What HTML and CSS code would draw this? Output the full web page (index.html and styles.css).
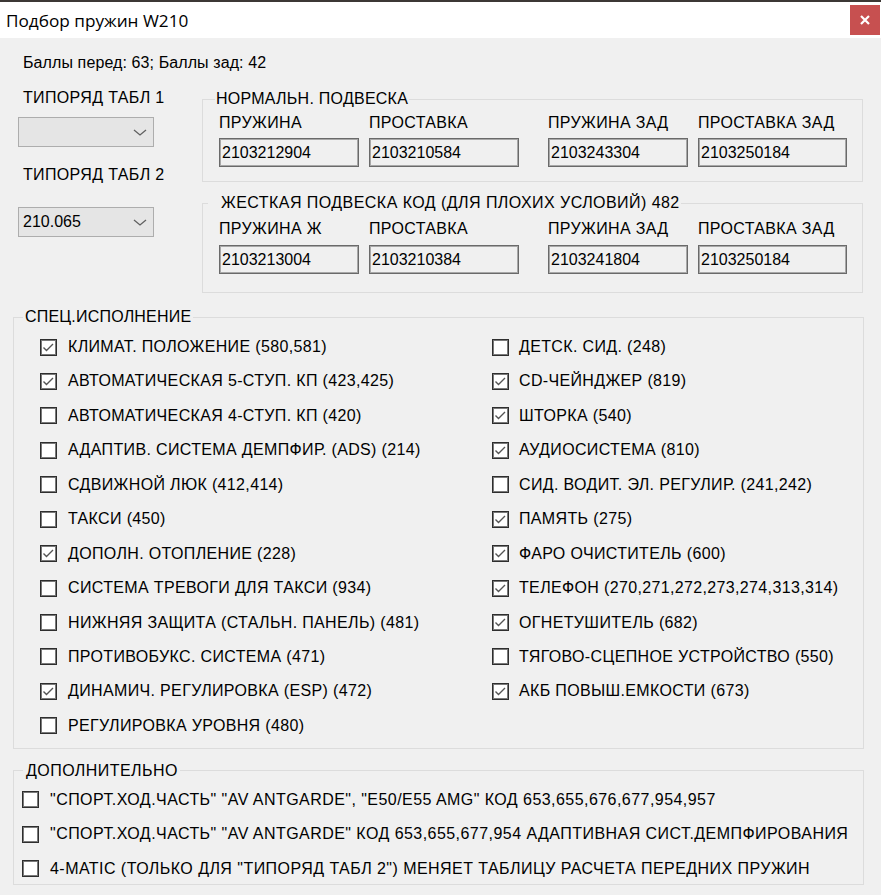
FILE: index.html
```html
<!DOCTYPE html>
<html lang="ru">
<head>
<meta charset="utf-8">
<title>Подбор пружин W210</title>
<link rel="stylesheet" href="styles.css">
</head>
<body>
<div class="window">
  <div class="titlebar">
    <span class="title">Подбор пружин W210</span>
    <div class="close"><svg width="10" height="10" viewBox="0 0 10 10"><path d="M1 1 L9 9 M9 1 L1 9" stroke="#fff" stroke-width="2.2" fill="none"/></svg></div>
  </div>
  <div class="content">
    <div class="score">Баллы перед: 63; Баллы зад: 42</div>
    <div class="top">
      <div class="left">
        <div class="lbl">ТИПОРЯД ТАБЛ 1</div>
        <div class="combo c1"><span></span><svg class="chev" width="14" height="7" viewBox="0 0 14 7"><path d="M1 1 L7 6 L13 1" stroke="#606060" stroke-width="1.3" fill="none"/></svg></div>
        <div class="lbl l2">ТИПОРЯД ТАБЛ 2</div>
        <div class="combo c2"><span>210.065</span><svg class="chev" width="14" height="7" viewBox="0 0 14 7"><path d="M1 1 L7 6 L13 1" stroke="#606060" stroke-width="1.3" fill="none"/></svg></div>
      </div>
      <div class="right">
        <fieldset class="grp g1">
          <legend>НОРМАЛЬН. ПОДВЕСКА</legend>
          <div class="fields">
            <div class="field f140"><div class="flbl">ПРУЖИНА</div><div class="tb">2103212904</div></div>
            <div class="field f150"><div class="flbl">ПРОСТАВКА</div><div class="tb">2103210584</div></div>
            <div class="field f140"><div class="flbl">ПРУЖИНА ЗАД</div><div class="tb">2103243304</div></div>
            <div class="field f149"><div class="flbl">ПРОСТАВКА ЗАД</div><div class="tb">2103250184</div></div>
          </div>
        </fieldset>
        <fieldset class="grp g2">
          <legend>ЖЕСТКАЯ ПОДВЕСКА КОД (ДЛЯ ПЛОХИХ УСЛОВИЙ) 482</legend>
          <div class="fields">
            <div class="field f140"><div class="flbl">ПРУЖИНА Ж</div><div class="tb">2103213004</div></div>
            <div class="field f150"><div class="flbl">ПРОСТАВКА</div><div class="tb">2103210384</div></div>
            <div class="field f140"><div class="flbl">ПРУЖИНА ЗАД</div><div class="tb">2103241804</div></div>
            <div class="field f149"><div class="flbl">ПРОСТАВКА ЗАД</div><div class="tb">2103250184</div></div>
          </div>
        </fieldset>
      </div>
    </div>

    <fieldset class="grp spec">
      <legend>СПЕЦ.ИСПОЛНЕНИЕ</legend>
      <div class="cols">
        <div class="col cl">
          <div class="cb"><span class="box on"><svg width="15" height="15" viewBox="0 0 15 15"><path d="M2.5 7.5 L5.5 10.5 L12 4" stroke="#555" stroke-width="1.4" fill="none"/></svg></span><span>КЛИМАТ. ПОЛОЖЕНИЕ (580,581)</span></div>
          <div class="cb"><span class="box on"><svg width="15" height="15" viewBox="0 0 15 15"><path d="M2.5 7.5 L5.5 10.5 L12 4" stroke="#555" stroke-width="1.4" fill="none"/></svg></span><span>АВТОМАТИЧЕСКАЯ 5-СТУП. КП (423,425)</span></div>
          <div class="cb"><span class="box"></span><span>АВТОМАТИЧЕСКАЯ 4-СТУП. КП (420)</span></div>
          <div class="cb"><span class="box"></span><span>АДАПТИВ. СИСТЕМА ДЕМПФИР. (ADS) (214)</span></div>
          <div class="cb"><span class="box"></span><span>СДВИЖНОЙ ЛЮК (412,414)</span></div>
          <div class="cb"><span class="box"></span><span>ТАКСИ (450)</span></div>
          <div class="cb"><span class="box on"><svg width="15" height="15" viewBox="0 0 15 15"><path d="M2.5 7.5 L5.5 10.5 L12 4" stroke="#555" stroke-width="1.4" fill="none"/></svg></span><span>ДОПОЛН. ОТОПЛЕНИЕ (228)</span></div>
          <div class="cb"><span class="box"></span><span>СИСТЕМА ТРЕВОГИ ДЛЯ ТАКСИ (934)</span></div>
          <div class="cb"><span class="box"></span><span>НИЖНЯЯ ЗАЩИТА (СТАЛЬН. ПАНЕЛЬ) (481)</span></div>
          <div class="cb"><span class="box"></span><span>ПРОТИВОБУКС. СИСТЕМА (471)</span></div>
          <div class="cb"><span class="box on"><svg width="15" height="15" viewBox="0 0 15 15"><path d="M2.5 7.5 L5.5 10.5 L12 4" stroke="#555" stroke-width="1.4" fill="none"/></svg></span><span>ДИНАМИЧ. РЕГУЛИРОВКА (ESP) (472)</span></div>
          <div class="cb"><span class="box"></span><span>РЕГУЛИРОВКА УРОВНЯ (480)</span></div>
        </div>
        <div class="col cr">
          <div class="cb"><span class="box"></span><span>ДЕТСК. СИД. (248)</span></div>
          <div class="cb"><span class="box on"><svg width="15" height="15" viewBox="0 0 15 15"><path d="M2.5 7.5 L5.5 10.5 L12 4" stroke="#555" stroke-width="1.4" fill="none"/></svg></span><span>CD-ЧЕЙНДЖЕР (819)</span></div>
          <div class="cb"><span class="box on"><svg width="15" height="15" viewBox="0 0 15 15"><path d="M2.5 7.5 L5.5 10.5 L12 4" stroke="#555" stroke-width="1.4" fill="none"/></svg></span><span>ШТОРКА (540)</span></div>
          <div class="cb"><span class="box on"><svg width="15" height="15" viewBox="0 0 15 15"><path d="M2.5 7.5 L5.5 10.5 L12 4" stroke="#555" stroke-width="1.4" fill="none"/></svg></span><span>АУДИОСИСТЕМА (810)</span></div>
          <div class="cb"><span class="box"></span><span>СИД. ВОДИТ. ЭЛ. РЕГУЛИР. (241,242)</span></div>
          <div class="cb"><span class="box on"><svg width="15" height="15" viewBox="0 0 15 15"><path d="M2.5 7.5 L5.5 10.5 L12 4" stroke="#555" stroke-width="1.4" fill="none"/></svg></span><span>ПАМЯТЬ (275)</span></div>
          <div class="cb"><span class="box on"><svg width="15" height="15" viewBox="0 0 15 15"><path d="M2.5 7.5 L5.5 10.5 L12 4" stroke="#555" stroke-width="1.4" fill="none"/></svg></span><span>ФАРО ОЧИСТИТЕЛЬ (600)</span></div>
          <div class="cb"><span class="box on"><svg width="15" height="15" viewBox="0 0 15 15"><path d="M2.5 7.5 L5.5 10.5 L12 4" stroke="#555" stroke-width="1.4" fill="none"/></svg></span><span>ТЕЛЕФОН (270,271,272,273,274,313,314)</span></div>
          <div class="cb"><span class="box on"><svg width="15" height="15" viewBox="0 0 15 15"><path d="M2.5 7.5 L5.5 10.5 L12 4" stroke="#555" stroke-width="1.4" fill="none"/></svg></span><span>ОГНЕТУШИТЕЛЬ (682)</span></div>
          <div class="cb"><span class="box"></span><span>ТЯГОВО-СЦЕПНОЕ УСТРОЙСТВО (550)</span></div>
          <div class="cb"><span class="box on"><svg width="15" height="15" viewBox="0 0 15 15"><path d="M2.5 7.5 L5.5 10.5 L12 4" stroke="#555" stroke-width="1.4" fill="none"/></svg></span><span>АКБ ПОВЫШ.ЕМКОСТИ (673)</span></div>
        </div>
      </div>
    </fieldset>

    <fieldset class="grp extra">
      <legend>ДОПОЛНИТЕЛЬНО</legend>
      <div class="rows">
        <div class="cb"><span class="box"></span><span>"СПОРТ.ХОД.ЧАСТЬ" "AV ANTGARDE", "E50/E55 AMG" КОД 653,655,676,677,954,957</span></div>
        <div class="cb"><span class="box"></span><span>"СПОРТ.ХОД.ЧАСТЬ" "AV ANTGARDE" КОД 653,655,677,954 АДАПТИВНАЯ СИСТ.ДЕМПФИРОВАНИЯ</span></div>
        <div class="cb"><span class="box"></span><span>4-MATIC (ТОЛЬКО ДЛЯ "ТИПОРЯД ТАБЛ 2") МЕНЯЕТ ТАБЛИЦУ РАСЧЕТА ПЕРЕДНИХ ПРУЖИН</span></div>
      </div>
    </fieldset>
  </div>
</div>
</body>
</html>
```

FILE: styles.css
```css
html, body {
  margin: 0;
  padding: 0;
}
body {
  background: #f0f0f0;
  font-family: "Liberation Sans", Arial, sans-serif;
  font-size: 16px;
  color: #000;
  letter-spacing: 0.35px;
}
.window {
  width: 881px;
  height: 895px;
  overflow: hidden;
}
.titlebar {
  height: 36px;
  border-top: 2px solid #3c3835;
  background: #fff;
  display: flex;
  align-items: flex-start;
}
.title {
  flex: 1;
  font-family: "Open Sans", "Noto Sans", sans-serif;
  font-size: 17.2px;
  letter-spacing: 0;
  line-height: 37px;
  padding-left: 6px;
}
.close {
  width: 30px;
  height: 30px;
  margin: 3px 1px 0 0;
  background: #c75050;
  display: flex;
  align-items: center;
  justify-content: center;
}
.content {
  padding: 15px 0 0 13px;
}
.score {
  margin-left: 10px;
  height: 20px;
  line-height: 20px;
  letter-spacing: 0.1px;
}
.top {
  display: flex;
  margin-top: 15px;
}
.left {
  width: 136px;
  margin-left: 5px;
}
.right {
  width: 661px;
  margin-left: 48px;
}
.lbl {
  padding-left: 5px;
  line-height: 20px;
  white-space: nowrap;
}
.lbl.l2 {
  margin-top: 18px;
}
.combo {
  height: 30px;
  box-sizing: border-box;
  border: 1px solid #adadad;
  background: #e5e5e5;
  display: flex;
  align-items: center;
  justify-content: space-between;
  padding: 0 6px 0 4px;
  line-height: 20px;
  letter-spacing: 0;
}
.combo.c1 {
  margin-top: 9px;
}
.combo.c2 {
  margin-top: 22px;
}
.chev {
  display: block;
}

.grp {
  margin: 0;
  padding: 0;
  border: 1px solid #dcdcdc;
  box-sizing: border-box;
  min-width: 0;
}
.grp legend {
  font-size: 16px;
  line-height: 20px;
  padding: 0 1px;
  margin-left: 12px;
  white-space: nowrap;
}
.g1 {
  margin-top: 1px;
}
.g1 legend {
  letter-spacing: 0.25px;
}
.g2 {
  margin-top: 11px;
}
.g2 legend {
  margin-left: 5px;
  padding: 0 1px 0 13px;
  letter-spacing: 0.45px;
}
.fields {
  display: flex;
  gap: 10px;
  padding-left: 16px;
}
.g1 .fields {
  padding-top: 4px;
  padding-bottom: 14px;
}
.g2 .fields {
  padding-top: 6px;
  padding-bottom: 18px;
}
.field:nth-child(3) {
  margin-left: 19px;
}
.f140 { width: 140px; }
.f150 { width: 150px; }
.f149 { width: 149px; }
.flbl {
  line-height: 20px;
  white-space: nowrap;
}
.tb {
  height: 29px;
  box-sizing: border-box;
  border: 1px solid #6a6a6a;
  box-shadow: inset 0 0 0 1px #a8a8a8;
  background: #f0f0f0;
  padding-left: 2px;
  line-height: 27px;
  margin-top: 5px;
  letter-spacing: 0;
}
.g2 .tb {
  margin-top: 6px;
}

.spec {
  margin-top: 14px;
  width: 851px;
}
.spec legend {
  margin-left: 9px;
  padding: 0 2px;
  letter-spacing: 0.2px;
}
.cols {
  display: flex;
  padding: 5px 0 7px 26px;
}
.col {
  display: flex;
  flex-direction: column;
  gap: 4.45px;
}
.col.cl {
  width: 452px;
}
.cb {
  display: flex;
  align-items: center;
  gap: 11px;
  height: 30px;
  line-height: 20px;
  white-space: nowrap;
}
.col.cr .cb {
  gap: 10px;
}
.box {
  width: 17px;
  height: 17px;
  box-sizing: border-box;
  border: 1px solid #2e2e2e;
  box-shadow: inset 0 0 0 1px #7a7a7a;
  background: #fff;
  flex: none;
  display: flex;
  align-items: center;
  justify-content: center;
}
.box svg {
  display: block;
}

.extra {
  margin-top: 12px;
  width: 851px;
}
.extra legend {
  margin-left: 9px;
  padding: 0 2px 0 3px;
  letter-spacing: 0.45px;
}
.rows {
  display: flex;
  flex-direction: column;
  gap: 4.5px;
  padding: 4px 0 0 8px;
  letter-spacing: 0.45px;
}
```
